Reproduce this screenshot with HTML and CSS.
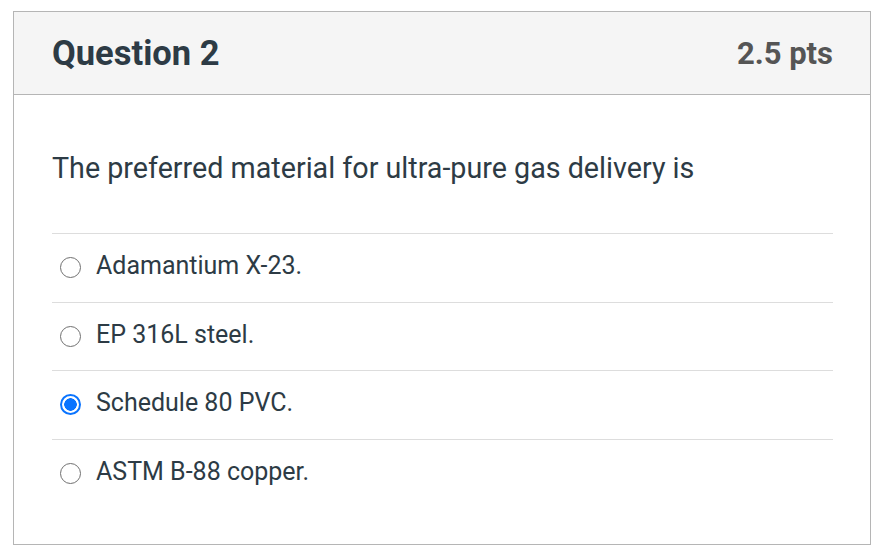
FILE: index.html
```html
<!DOCTYPE html>
<html>
<head>
<meta charset="utf-8">
<link rel="stylesheet" href="styles.css">
</head>
<body>
<div class="card">
  <div class="header">
    <h2 class="title">Question 2</h2>
    <div class="pts">2.5 pts</div>
  </div>
  <div class="body">
    <p class="question">The preferred material for ultra-pure gas delivery is</p>
    <div class="answers">
      <label class="answer"><span class="radio"></span><span class="atext">Adamantium X-23.</span></label>
      <label class="answer"><span class="radio"></span><span class="atext">EP 316L steel.</span></label>
      <label class="answer"><span class="radio checked"></span><span class="atext">Schedule 80 PVC.</span></label>
      <label class="answer"><span class="radio"></span><span class="atext">ASTM B-88 copper.</span></label>
    </div>
  </div>
</div>
</body>
</html>
```
FILE: styles.css
```css
* { box-sizing: border-box; }
html, body { margin: 0; padding: 0; background: #fff; }
body {
  font-family: Roboto, "Liberation Sans", sans-serif;
  color: #2d3b45;
  padding: 11px 13px 0 13px;
}
.card {
  width: 858px;
  height: 534px;
  border: 1px solid #b5b5b5;
}
.header {
  height: 83px;
  background: #f5f5f5;
  border-bottom: 1px solid #b5b5b5;
  display: flex;
  align-items: center;
  justify-content: space-between;
  padding: 0 37px 0 38px;
}
.title {
  margin: 0;
  font-size: 34.5px;
  font-weight: 700;
  color: #2d3b45;
}
.pts {
  font-size: 31px;
  font-weight: 700;
  color: #555;
}
.body {
  padding: 0 37px 0 38px;
}
.question {
  margin: 0;
  padding-top: 55px;
  height: 138px;
  font-size: 28.7px;
  line-height: 36px;
}
.answers { display: flex; flex-direction: column; }
.answer {
  display: flex;
  align-items: center;
  height: 68.5px;
  border-top: 1px solid #ddd;
  font-size: 25px;
}
.radio {
  width: 21px;
  height: 21px;
  border: 1.5px solid #707070;
  border-radius: 50%;
  margin-left: 8px;
  margin-right: 15px;
  flex: none;
}
.radio.checked {
  border: 2px solid #0a74ff;
  background: radial-gradient(circle, #0a74ff 0 6px, #fff 6.5px);
}
.atext {
  color: #2d3b45;
  margin-bottom: 4px;
}
```
